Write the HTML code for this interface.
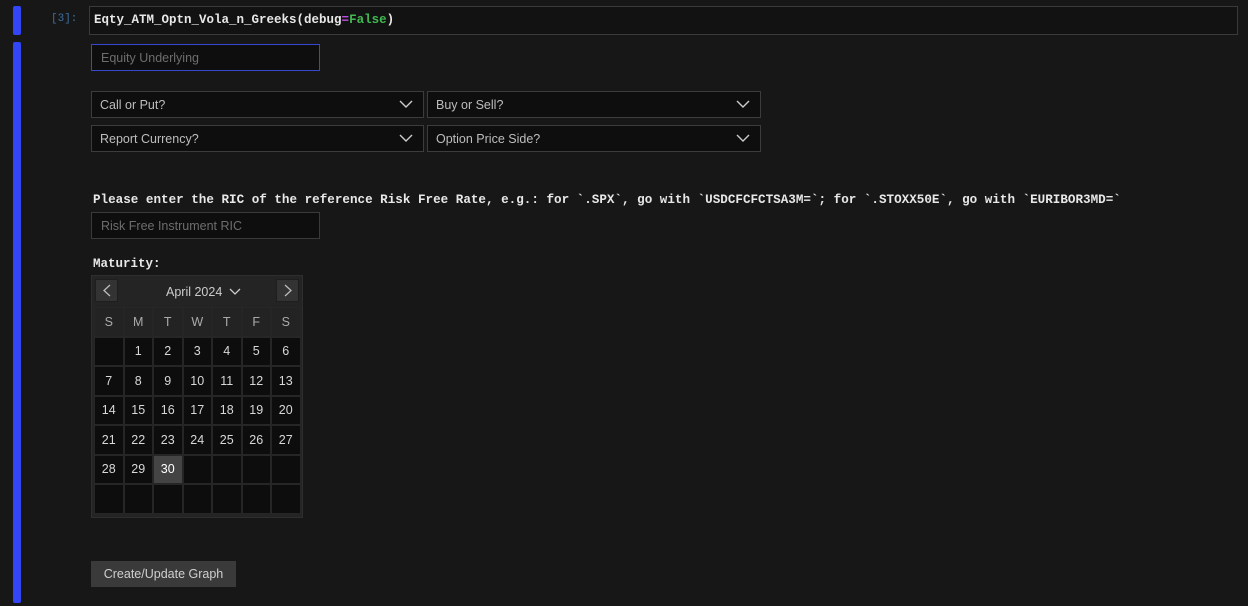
<!DOCTYPE html>
<html><head><meta charset="utf-8"><style>
*{box-sizing:border-box;margin:0;padding:0}
body{width:1248px;height:606px;background:#171717;position:relative;overflow:hidden;font-family:"Liberation Sans",sans-serif;color:#ccc}
.a{position:absolute}
.bar{background:#3346f5;left:13px;width:8px;border-radius:2px}
.mono{font-family:"Liberation Mono",monospace;font-weight:bold;font-size:12.5px;color:#e8e8e8;white-space:pre}
.inp{background:#0e0e0e;border:1px solid #3a3a3a;font-size:12.5px;color:#6d6d6d;padding-left:9px;display:flex;align-items:center}
.dd{background:#0e0e0e;border:1px solid #3c3c3c;font-size:12.5px;color:#bdbdbd;padding-left:8px;display:flex;align-items:center}
.dd svg{position:absolute;right:10px;top:8px}
.cal{left:91px;top:275px;width:212px;height:243px;background:#242424;border:1px solid #2e2e2e}
.grid{position:absolute;left:2px;top:31px;display:grid;grid-template-columns:repeat(7,29.5px);grid-auto-rows:29.5px;gap:0}
.grid div{border:1px solid #262626;background:#0d0d0d;color:#d8d8d8;font-size:12.5px;display:flex;align-items:center;justify-content:center}
.grid div.h{background:#232323;color:#aaa}
.grid div.s{background:#444;color:#fff}
.nav{position:absolute;top:3px;width:23px;height:23px;background:#333;border:1px solid #1e1e1e;display:flex;align-items:center;justify-content:center}
</style></head><body>
<div class="a bar" style="top:6px;height:29px"></div>
<div class="a bar" style="top:42px;height:561px"></div>
<div class="a mono" style="left:51px;top:13px;font-weight:normal;color:#3d6fa0;font-size:11px">[3]:</div>
<div class="a" style="left:89px;top:6px;width:1149px;height:29px;background:#121212;border:1px solid #3a3a3a"></div>
<div class="a mono" style="left:94px;top:13px">Eqty_ATM_Optn_Vola_n_Greeks(debug<span style="color:#c050e0">=</span><span style="color:#3fb950">False</span>)</div>
<div class="a inp" style="left:91px;top:44px;width:229px;height:27px;border:1px solid #3548d0">Equity Underlying</div>
<div class="a dd" style="left:91px;top:91px;width:333px;height:27px">Call or Put?<svg width="14" height="9"><path d="M1 1l6 6 6-6" fill="none" stroke="#ccc" stroke-width="1.4"/></svg></div>
<div class="a dd" style="left:427px;top:91px;width:334px;height:27px">Buy or Sell?<svg width="14" height="9"><path d="M1 1l6 6 6-6" fill="none" stroke="#ccc" stroke-width="1.4"/></svg></div>
<div class="a dd" style="left:91px;top:125px;width:333px;height:27px">Report Currency?<svg width="14" height="9"><path d="M1 1l6 6 6-6" fill="none" stroke="#ccc" stroke-width="1.4"/></svg></div>
<div class="a dd" style="left:427px;top:125px;width:334px;height:27px">Option Price Side?<svg width="14" height="9"><path d="M1 1l6 6 6-6" fill="none" stroke="#ccc" stroke-width="1.4"/></svg></div>
<div class="a mono" style="left:93px;top:193px;font-size:12.6px">Please enter the RIC of the reference Risk Free Rate, e.g.: for `.SPX`, go with `USDCFCFCTSA3M=`; for `.STOXX50E`, go with `EURIBOR3MD=`</div>
<div class="a inp" style="left:91px;top:212px;width:229px;height:27px">Risk Free Instrument RIC</div>
<div class="a mono" style="left:93px;top:257px">Maturity:</div>
<div class="a cal">
<div class="nav" style="left:3px"><svg width="8" height="13"><path d="M7 1L1 6.5 7 12" fill="none" stroke="#bbb" stroke-width="1.3"/></svg></div>
<div class="nav" style="left:184px"><svg width="8" height="13"><path d="M1 1l6 5.5L1 12" fill="none" stroke="#bbb" stroke-width="1.3"/></svg></div>
<div style="position:absolute;left:74px;top:9px;font-size:12.5px;color:#ccc">April 2024 <svg width="12" height="8" style="margin-left:3px"><path d="M1 1l5 5 5-5" fill="none" stroke="#ccc" stroke-width="1.3"/></svg></div>
<div class="grid">
<div class="h">S</div><div class="h">M</div><div class="h">T</div><div class="h">W</div><div class="h">T</div><div class="h">F</div><div class="h">S</div>
<div></div><div>1</div><div>2</div><div>3</div><div>4</div><div>5</div><div>6</div>
<div>7</div><div>8</div><div>9</div><div>10</div><div>11</div><div>12</div><div>13</div>
<div>14</div><div>15</div><div>16</div><div>17</div><div>18</div><div>19</div><div>20</div>
<div>21</div><div>22</div><div>23</div><div>24</div><div>25</div><div>26</div><div>27</div>
<div>28</div><div>29</div><div class="s">30</div><div></div><div></div><div></div><div></div>
<div></div><div></div><div></div><div></div><div></div><div></div><div></div>
</div></div>
<div class="a" style="left:91px;top:561px;width:145px;height:26px;background:#3a3a3a;color:#cfcfcf;font-size:12.5px;display:flex;align-items:center;justify-content:center">Create/Update Graph</div>
</body></html>
